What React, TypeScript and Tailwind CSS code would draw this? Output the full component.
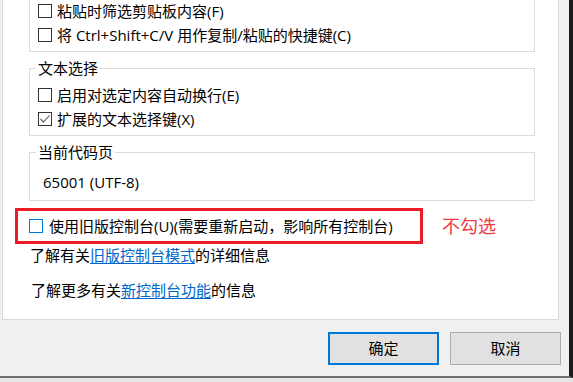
import React from "react"

const font = { fontFamily: '"Open Sans", "Noto Sans CJK SC", sans-serif' }

function Checkbox({ checked = false, focus = false }: { checked?: boolean; focus?: boolean }) {
  return (
    <span
      className={`flex h-[14px] w-[14px] shrink-0 items-center justify-center border bg-white ${
        focus ? "border-[#0078d7]" : "border-[#333333]"
      }`}
    >
      {checked && (
        <svg width="12" height="12" viewBox="0 0 12 12" fill="none">
          <polyline points="1.5,6 4.5,9 10.5,2.5" stroke="#555555" strokeWidth="1.1" />
        </svg>
      )}
    </span>
  )
}

function Row({ label, checked }: { label: string; checked?: boolean }) {
  return (
    <div className="flex h-[24px] items-center gap-[5px] pl-[8px]">
      <Checkbox checked={checked} />
      <span className="whitespace-nowrap leading-[24px]">{label}</span>
    </div>
  )
}

function Group({ title, children }: { title: string; children: React.ReactNode }) {
  return (
    <fieldset className="ml-[26px] w-[506px] border border-[#dcdcdc] px-0">
      <legend className="ml-[6px] px-[2px] leading-[20px]">{title}</legend>
      {children}
    </fieldset>
  )
}

export default function App() {
  return (
    <div className="flex h-[382px] w-[573px] flex-col bg-[#e6e6e6] text-[15px] text-black" style={font}>
      <div className="h-[378px] w-[573px] shrink-0 border-r-[4px] border-b-[2px] border-r-[#1b1b1b] border-b-[#707070] bg-[#f0f0f0]">
        {/* tab page */}
        <div className="ml-[2px] flex h-[320px] w-[557px] flex-col border border-t-0 border-[#d9d9d9] bg-white">
          {/* clipboard group, cut off at top */}
          <div className="-mt-[1px] ml-[26px] w-[506px] border border-t-0 border-[#dcdcdc] pb-[4px]">
            <Row label="粘贴时筛选剪贴板内容(F)" />
            <Row label="将 Ctrl+Shift+C/V 用作复制/粘贴的快捷键(C)" />
          </div>

          <div className="mt-[6px]">
            <Group title="文本选择">
              <div className="pt-[5px] pb-[4px]">
                <Row label="启用对选定内容自动换行(E)" />
                <Row label="扩展的文本选择键(X)" checked />
              </div>
            </Group>
          </div>

          <div className="mt-[6px]">
            <Group title="当前代码页">
              <div className="pt-[8px] pb-[6px] pl-[13px] leading-[24px]">65001 (UTF-8)</div>
            </Group>
          </div>

          <div className="mt-[7px] flex items-center">
            <div className="ml-[12px] flex h-[36px] w-[408px] items-center gap-[6px] border-[3px] border-[#ea1c24] pl-[11px]">
              <Checkbox focus />
              <span className="whitespace-nowrap leading-[24px]">使用旧版控制台(U)(需要重新启动，影响所有控制台)</span>
            </div>
            <span className="ml-[19px] text-[18px] leading-[24px] text-[#ee3b45]">不勾选</span>
          </div>

          <div className="-mt-[1px] ml-[27px] leading-[24px]">
            了解有关<span className="text-[#0066cc] underline underline-offset-2">旧版控制台模式</span>的详细信息
          </div>
          <div className="mt-[11px] ml-[28px] leading-[24px]">
            了解更多有关<span className="text-[#0066cc] underline underline-offset-2">新控制台功能</span>的信息
          </div>
        </div>

        {/* dialog buttons */}
        <div className="mt-[12px] flex justify-end gap-[11px] pr-[8px]">
          <button className="h-[33px] w-[111px] border-2 border-[#0078d7] bg-[#e1e1e1] text-[15px]">确定</button>
          <button className="h-[33px] w-[111px] border border-[#adadad] bg-[#e1e1e1] text-[15px]">取消</button>
        </div>
      </div>
    </div>
  )
}
